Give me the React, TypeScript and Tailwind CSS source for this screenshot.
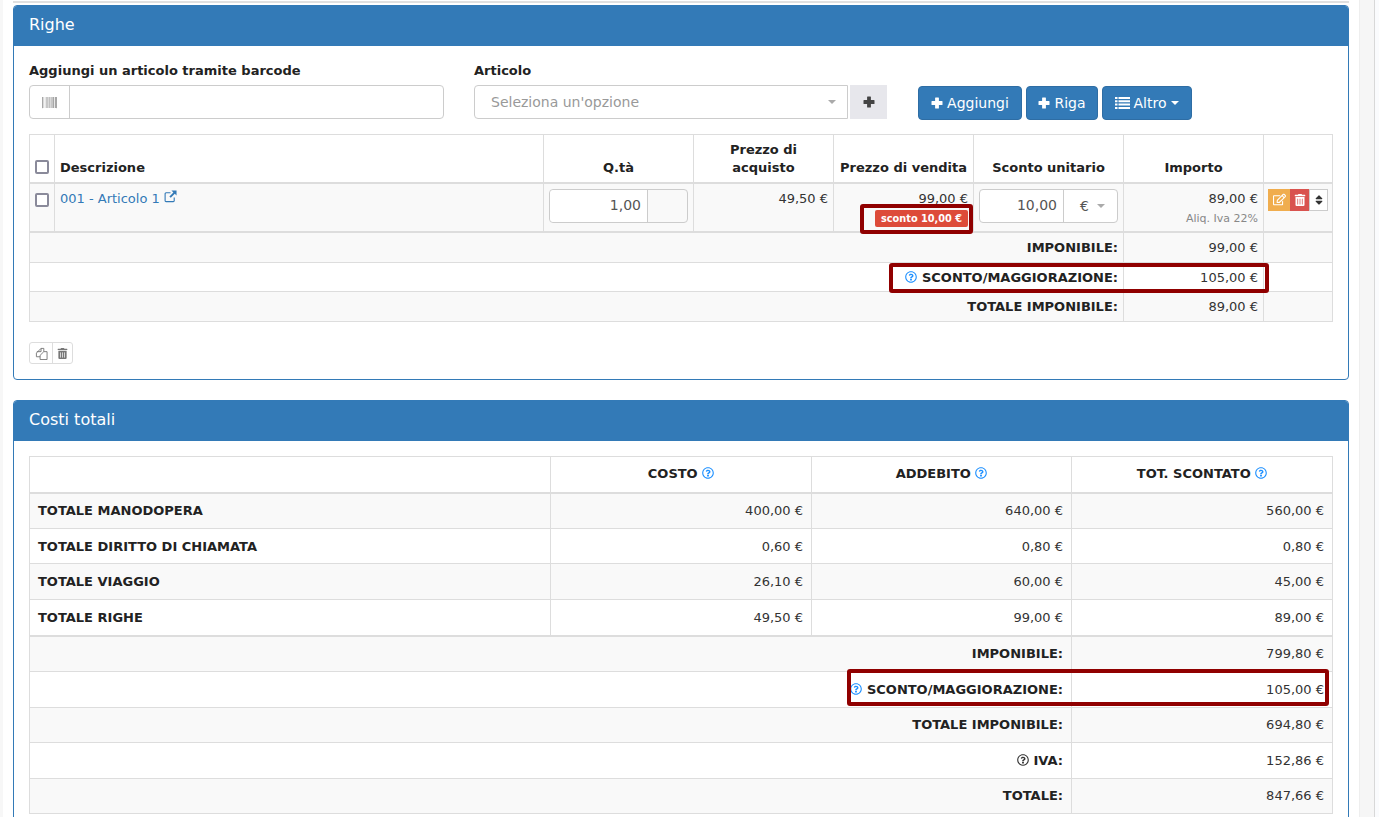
import { FaBarcode, FaRegEdit, FaRegQuestionCircle, FaSort, FaTrashAlt } from 'react-icons/fa';

const righeTotals = [
  { label: 'IMPONIBILE:', value: '99,00 €', bg: 'bg-[#f9f9f9]', h: 'h-[31px]', pad: 'pt-[2px]' },
  { label: 'SCONTO/MAGGIORAZIONE:', value: '105,00 €', bg: 'bg-white', h: 'h-[29px]', pad: 'pt-[2px]', help: true },
  { label: 'TOTALE IMPONIBILE:', value: '89,00 €', bg: 'bg-[#f9f9f9]', h: 'h-[30px]', pad: '' },
];

const costi = [
  { label: 'TOTALE MANODOPERA', costo: '400,00 €', addebito: '640,00 €', scontato: '560,00 €', bg: 'bg-[#f9f9f9]', h: 'h-[36px]', pad: 'pt-[1px]' },
  { label: 'TOTALE DIRITTO DI CHIAMATA', costo: '0,60 €', addebito: '0,80 €', scontato: '0,80 €', bg: 'bg-white', h: 'h-[35px]', pad: 'pt-[2px]' },
  { label: 'TOTALE VIAGGIO', costo: '26,10 €', addebito: '60,00 €', scontato: '45,00 €', bg: 'bg-[#f9f9f9]', h: 'h-[36px]', pad: '' },
  { label: 'TOTALE RIGHE', costo: '49,50 €', addebito: '99,00 €', scontato: '89,00 €', bg: 'bg-white', h: 'h-[36px]', pad: 'pt-[2px]' },
];

const costiTotals = [
  { label: 'IMPONIBILE:', value: '799,80 €', bg: 'bg-[#f9f9f9]', h: 'h-[36px]', first: true },
  { label: 'SCONTO/MAGGIORAZIONE:', value: '105,00 €', bg: 'bg-white', h: 'h-[36px]', help: true },
  { label: 'TOTALE IMPONIBILE:', value: '694,80 €', bg: 'bg-[#f9f9f9]', h: 'h-[35px]' },
  { label: 'IVA:', value: '152,86 €', bg: 'bg-white', h: 'h-[36px]', helpDark: true },
  { label: 'TOTALE:', value: '847,66 €', bg: 'bg-[#f9f9f9]', h: 'h-[35px]' },
];

function Help() {
  return <FaRegQuestionCircle className="inline-block text-[12px] text-[#1e90ff] align-[-1px]" />;
}

function Checkbox({ className }: { className?: string }) {
  return <span className={`block w-[14px] h-[14px] mx-auto border-2 border-[#8a8a9a] rounded-[2px] bg-white ${className ?? ''}`} />;
}

function PlusIcon({ className }: { className?: string }) {
  return (
    <svg viewBox="0 0 12 12" className={className} fill="currentColor">
      <path d="M4.6 0.5h2.8q0.5 0 0.5 0.5v3.1H11q0.5 0 0.5 0.5v2.8q0 0.5-0.5 0.5H7.9V11q0 0.5-0.5 0.5H4.6q-0.5 0-0.5-0.5V7.9H1q-0.5 0-0.5-0.5V4.6q0-0.5 0.5-0.5h3.1V1q0-0.5 0.5-0.5z" />
    </svg>
  );
}

function ListIcon() {
  return (
    <svg viewBox="0 0 15 12" className="w-[15px] h-[12px]" fill="currentColor">
      <path d="M0 0h2.5v2H0zM3.5 0H15v2H3.5zM0 3.3h2.5v2H0zM3.5 3.3H15v2H3.5zM0 6.6h2.5v2H0zM3.5 6.6H15v2H3.5zM0 9.9h2.5v2H0zM3.5 9.9H15v2H3.5z" />
    </svg>
  );
}

function FilesIcon() {
  return (
    <svg viewBox="0 0 14 14" className="w-[13px] h-[13px]" fill="none" stroke="currentColor" strokeWidth="1">
      <path d="M6.5 1.5H9.5V5M6.5 1.5L1.5 6.5V10.5H5.5M6.5 1.5V5H2" />
      <path d="M9.5 5L5.5 9V13.5H13V5Z" />
    </svg>
  );
}

function LinkIcon() {
  return (
    <svg viewBox="0 0 14 14" className="inline-block w-[13px] h-[13px] align-[0px]">
      <path d="M11 8v3.5a1 1 0 0 1-1 1H2.2a1 1 0 0 1-1-1V4a1 1 0 0 1 1-1H7" fill="none" stroke="currentColor" strokeWidth="1.2" />
      <path d="M8 0.5h5.5V6l-1.9-1.9-4.3 4.3-1.5-1.5 4.3-4.3z" fill="currentColor" />
    </svg>
  );
}

function Caret({ className }: { className: string }) {
  return <span className={`inline-block w-0 h-0 border-x-[4px] border-t-[4px] border-x-transparent ${className}`} />;
}

function Panel({ title, className, children }: { title: string; className?: string; children: React.ReactNode }) {
  return (
    <section className={`rounded-[4px] border border-[#337ab7] bg-white ${className ?? ''}`}>
      <h3 className="h-[40px] bg-[#337ab7] px-[15px] text-[16px] leading-[38px] text-white rounded-t-[3px]">{title}</h3>
      {children}
    </section>
  );
}

export default function App() {
  const td = 'border border-[#ddd] px-[5px]';
  const th = 'border border-[#ddd] border-b-2 px-[5px] align-bottom text-center font-bold text-[#222] leading-[18px]';
  const cell = 'border border-[#ddd] px-[8px]';

  return (
    <div className="h-[817px] overflow-hidden bg-white flex text-[13px] leading-[18px] text-[#333]" style={{ fontFamily: '"DejaVu Sans", sans-serif' }}>
      <div className="w-[3px] shrink-0 bg-[#f7f7f7]" />
      <main className="w-[1346px] shrink-0 pl-[10px]">
        <div className="h-[2px] mt-px mb-[2px] bg-[#e0e0e0]" />

        {/* Righe */}
        <Panel title="Righe" className="h-[375px]">
          <div className="px-[15px] pt-[16px]">
            <div className="flex h-[72px]">
              <div className="w-[415px]">
                <label className="block font-bold text-[#222] mb-[5px]">Aggiungi un articolo tramite barcode</label>
                <div className="flex h-[34px] border border-[#ccc] rounded-[4px]">
                  <span className="w-[40px] flex items-center justify-center border-r border-[#ccc] text-[#888] text-[15px]"><FaBarcode /></span>
                  <span className="flex-1" />
                </div>
              </div>
              <div className="ml-[30px] w-[374px]">
                <label className="block font-bold text-[#222] mb-[5px]">Articolo</label>
                <div className="flex h-[34px] items-center justify-between border border-[#ccc] rounded-l-[4px] pl-[16px] pr-[11px] text-[14px] text-[#999]">
                  <span>Seleziona un'opzione</span>
                  <Caret className="border-t-[#aaa]" />
                </div>
              </div>
              <div className="ml-[2px] mt-[23px] w-[37px] h-[34px] flex items-center justify-center bg-[#e7e7ec] text-[#444]"><PlusIcon className="w-[12px] h-[12px]" /></div>
              <div className="ml-[31px] mt-[24px] flex gap-[4px] text-[14px] text-white">
                <button className="h-[34px] w-[104px] flex items-center justify-center gap-[4px] rounded-[4px] bg-[#337ab7] border border-[#2e6da4]"><PlusIcon className="w-[12px] h-[12px]" />Aggiungi</button>
                <button className="h-[34px] w-[72px] flex items-center justify-center gap-[4px] rounded-[4px] bg-[#337ab7] border border-[#2e6da4]"><PlusIcon className="w-[12px] h-[12px]" />Riga</button>
                <button className="h-[34px] w-[90px] flex items-center justify-center gap-[4px] rounded-[4px] bg-[#337ab7] border border-[#2e6da4]"><ListIcon />Altro<Caret className="border-t-white ml-px" /></button>
              </div>
            </div>

            <div className="relative">
              <table className="table-fixed w-[1303px] border-collapse">
                <colgroup>
                  <col className="w-[25px]" /><col className="w-[489px]" /><col className="w-[150px]" /><col className="w-[140px]" /><col className="w-[140px]" /><col className="w-[150px]" /><col className="w-[140px]" /><col className="w-[69px]" />
                </colgroup>
                <thead>
                  <tr className="h-[48px]">
                    <th className={`${th} !px-0 pb-[8px]`}><Checkbox /></th>
                    <th className={`${th} !text-left pb-[5px]`}>Descrizione</th>
                    <th className={`${th} pb-[5px]`}>Q.tà</th>
                    <th className={`${th} pb-[5px]`}>Prezzo di<br />acquisto</th>
                    <th className={`${th} whitespace-nowrap !px-0 pb-[5px]`}>Prezzo di vendita</th>
                    <th className={`${th} pb-[5px]`}>Sconto unitario</th>
                    <th className={`${th} pb-[5px]`}>Importo</th>
                    <th className={th} />
                  </tr>
                </thead>
                <tbody>
                  <tr className="h-[49px] bg-[#f9f9f9] border-b-2 border-[#ddd]">
                    <td className={`${td} !px-0 align-top pt-[9px]`}><Checkbox /></td>
                    <td className={`${td} align-top pt-[6px] text-[#337ab7]`}>001 - Articolo 1 <LinkIcon /></td>
                    <td className={`${td} align-top pt-[5px]`}>
                      <div className="flex h-[34px] border border-[#ccc] rounded-[4px]">
                        <span className="w-[98px] bg-white rounded-l-[4px] border-r border-[#ccc] text-right pr-[6px] leading-[31px] text-[14px] text-[#555]">1,00</span>
                      </div>
                    </td>
                    <td className={`${td} align-top pt-[6px] text-right`}>49,50 €</td>
                    <td className={`${td} align-top pt-[6px] text-right`}>
                      <div>99,00 €</div>
                      <span className="inline-block mt-[2px] h-[17px] px-[6px] rounded-[2px] bg-[#dd4b39] text-white font-bold text-[9.75px] leading-[17px] whitespace-nowrap">sconto 10,00 €</span>
                    </td>
                    <td className={`${td} align-top pt-[5px]`}>
                      <div className="flex h-[34px] border border-[#ccc] rounded-[4px] bg-white text-[14px] text-[#555]">
                        <span className="w-[84px] border-r border-[#ccc] text-right pr-[6px] leading-[31px]">10,00</span>
                        <span className="flex-1 flex items-center pl-[16px] gap-[8px]">€<Caret className="border-t-[#aaa]" /></span>
                      </div>
                    </td>
                    <td className={`${td} align-top pt-[6px] text-right`}>
                      <div>89,00 €</div>
                      <div className="mt-[2px] text-[11px] text-[#888]">Aliq. Iva 22%</div>
                    </td>
                    <td className={`${td} align-top pt-[5px] !pl-[4px]`}>
                      <div className="flex h-[22px] w-[60px]">
                        <span className="w-[22px] flex items-center justify-center bg-[#f0ad4e] text-white text-[13px]"><FaRegEdit /></span>
                        <span className="w-[19px] flex items-center justify-center bg-[#d9534f] text-white text-[12px]"><FaTrashAlt /></span>
                        <span className="w-[19px] flex items-center justify-center bg-white border border-[#ccc] text-[#333] text-[12px]"><FaSort /></span>
                      </div>
                    </td>
                  </tr>
                  {righeTotals.map((r) => (
                    <tr key={r.label} className={`${r.h} ${r.bg}`}>
                      <td colSpan={6} className={`${td} ${r.pad} text-right font-bold text-[#222]`}>{r.help && <><Help />{' '}</>}{r.label}</td>
                      <td className={`${td} ${r.pad} text-right`}>{r.value}</td>
                      <td className={td} />
                    </tr>
                  ))}
                </tbody>
              </table>
              <div className="absolute left-[831px] top-[70px] w-[113px] h-[30px] border-[4px] border-[#900000] rounded-[3px]" />
              <div className="absolute left-[860px] top-[129px] w-[380px] h-[30px] border-[4px] border-[#900000] rounded-[3px]" />
            </div>

            <div className="mt-[20px] flex w-[44px] h-[22px] border border-[#ddd] rounded-[3px] text-[#777] text-[11px]">
              <span className="w-[23px] flex items-center justify-center border-r border-[#ddd]"><FilesIcon /></span>
              <span className="flex-1 flex items-center justify-center"><FaTrashAlt /></span>
            </div>
          </div>
        </Panel>

        {/* Costi totali */}
        <Panel title="Costi totali" className="mt-[20px] h-[500px]">
          <div className="px-[15px] pt-[15px] relative">
            <table className="table-fixed w-[1303px] border-collapse">
              <colgroup>
                <col className="w-[521px]" /><col className="w-[261px]" /><col className="w-[260px]" /><col className="w-[261px]" />
              </colgroup>
              <thead>
                <tr className="h-[36px]">
                  <th className={th} />
                  <th className={`${th} pb-[9px]`}>COSTO <Help /></th>
                  <th className={`${th} pb-[9px]`}>ADDEBITO <Help /></th>
                  <th className={`${th} pb-[9px]`}>TOT. SCONTATO <Help /></th>
                </tr>
              </thead>
              <tbody>
                {costi.map((r) => (
                  <tr key={r.label} className={`${r.h} ${r.bg}`}>
                    <td className={`${cell} ${r.pad} font-bold text-[#222]`}>{r.label}</td>
                    <td className={`${cell} ${r.pad} text-right`}>{r.costo}</td>
                    <td className={`${cell} ${r.pad} text-right`}>{r.addebito}</td>
                    <td className={`${cell} ${r.pad} text-right`}>{r.scontato}</td>
                  </tr>
                ))}
                {costiTotals.map((r) => (
                  <tr key={r.label} className={`${r.h} ${r.bg}`}>
                    <td colSpan={3} className={`${cell} ${r.first ? 'border-t-2' : ''} text-right font-bold text-[#222]`}>
                      {r.help && <><Help />{' '}</>}
                      {r.helpDark && <><FaRegQuestionCircle className="inline-block text-[12px] text-[#333] align-[-1px]" />{' '}</>}
                      {r.label}
                    </td>
                    <td className={`${cell} ${r.first ? 'border-t-2' : ''} text-right`}>{r.value}</td>
                  </tr>
                ))}
              </tbody>
            </table>
            <div className="absolute left-[833px] top-[228px] w-[482px] h-[37px] border-[4px] border-[#900000] rounded-[3px]" />
          </div>
        </Panel>
      </main>
      <div className="ml-[10px] w-[16px] shrink-0 bg-[#f6f6f6] border-l border-l-[#eee] border-r border-r-[#d8d8d8]" />
      <div className="flex-1 bg-[#fafbfd]" />
    </div>
  );
}
